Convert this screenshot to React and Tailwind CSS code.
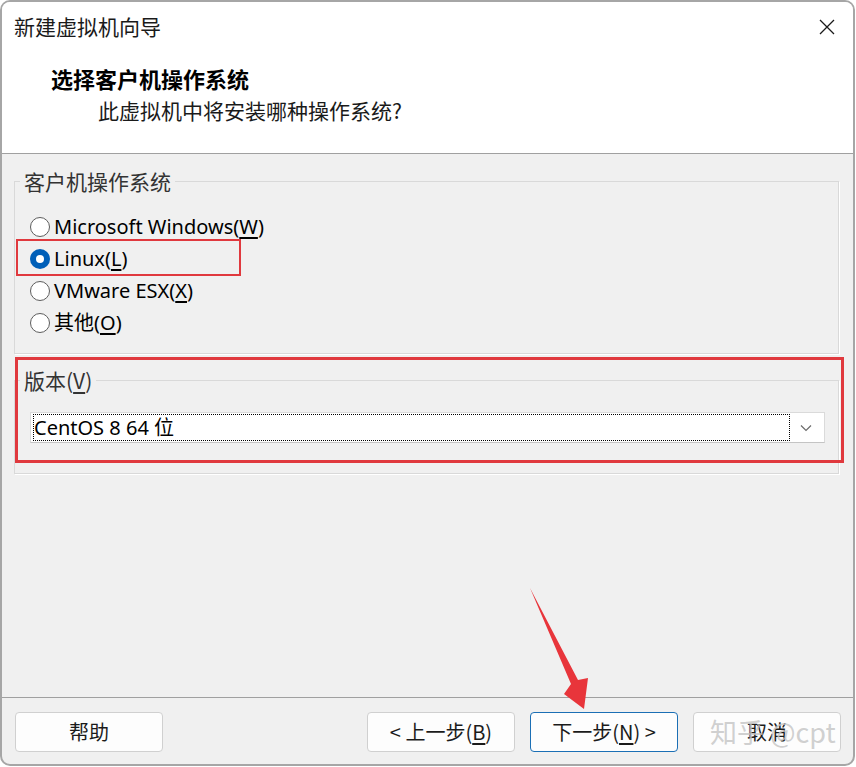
import React from 'react';

const cjk = '"Noto Sans CJK SC", sans-serif';

const Radio = ({ checked, children }) => (
  <div className="flex h-[32px] items-center">
    {checked ? (
      <span className="flex h-[20px] w-[20px] items-center justify-center rounded-full bg-[#005fb8]">
        <span className="h-[8px] w-[8px] rounded-full bg-white" />
      </span>
    ) : (
      <span className="h-[20px] w-[20px] rounded-full border border-[#5d5d5d] bg-white" />
    )}
    <span className="ml-[4px] text-[20px] leading-none text-black">{children}</span>
  </div>
);

const Btn = ({ children, focused }) => (
  <button
    type="button"
    className={`h-[40px] w-[148px] rounded-[4px] border bg-[#fdfdfd] text-[20px] text-[#1b1b1b] ${
      focused ? 'border-[#1b6fb5]' : 'border-[#d0d0d0]'
    }`}
  >
    {children}
  </button>
);

const U = ({ children }) => <span className="underline underline-offset-[3px]">{children}</span>;

export default function App() {
  return (
    <div className="relative h-[767px] w-[856px] bg-white" style={{ fontFamily: `"Noto Sans", ${cjk}` }}>
      <div className="flex h-[766px] w-[855px] flex-col overflow-hidden rounded-[10px] border-2 border-[#a6a6a6] bg-[#f0f0f0]">
        {/* header */}
        <div className="h-[152px] shrink-0 border-b border-[#a0a0a0] bg-white" style={{ fontFamily: cjk }}>
          <div className="flex h-[50px] items-center justify-between pl-[12px] pr-[18px]">
            <span className="text-[21px] text-[#1a1a1a]">新建虚拟机向导</span>
            <svg width="16" height="16" viewBox="0 0 16 16" className="text-[#1a1a1a]">
              <path d="M1 1 L15 15 M15 1 L1 15" stroke="currentColor" strokeWidth="1.3" fill="none" />
            </svg>
          </div>
          <div className="mt-[10px] h-[32px] pl-[49px] text-[22px] font-bold leading-[32px] text-black">
            选择客户机操作系统
          </div>
          <div className="h-[32px] pl-[96px] text-[21px] leading-[32px] text-[#1a1a1a]">
            此虚拟机中将安装哪种操作系统?
          </div>
        </div>

        {/* content */}
        <div className="h-[543px] shrink-0 pl-[12px] pr-[14px]">
          <fieldset className="mt-[13px] border border-[#d9d9d9] pb-[14px] pl-[15px] shadow-[1px_1px_0_#ffffff]">
            <legend className="-ml-[10px] px-[4px] text-[21px] leading-[28px] text-[#333]" style={{ fontFamily: cjk }}>
              客户机操作系统
            </legend>
            <div className="pt-[16px]">
              <Radio>
                Microsoft Windows(<U>W</U>)
              </Radio>
              <Radio checked>
                Linux(<U>L</U>)
              </Radio>
              <Radio>
                VMware ESX(<U>X</U>)
              </Radio>
              <Radio>
                其他(<U>O</U>)
              </Radio>
            </div>
          </fieldset>

          <fieldset className="mt-[12px] border border-[#d9d9d9] pb-[30px] pl-[15px] pr-[13px] shadow-[1px_1px_0_#ffffff]">
            <legend className="-ml-[10px] px-[4px] text-[21px] leading-[28px] text-[#333]" style={{ fontFamily: cjk }}>
              版本(<U>V</U>)
            </legend>
            <div className="mt-[18px] flex h-[31px] items-center border border-[#dadada] border-b-[#c4c4c4] bg-white pl-[2px] pr-[2px]">
              <div className="flex h-[27px] flex-1 items-center border border-dotted border-black text-[20px] text-black">
                CentOS 8 64 位
              </div>
              <div className="flex w-[32px] items-center justify-center">
                <svg width="12" height="8" viewBox="0 0 12 8">
                  <path d="M1 1.5 L6 6.5 L11 1.5" stroke="#6b6b6b" strokeWidth="1.2" fill="none" />
                </svg>
              </div>
            </div>
          </fieldset>
        </div>

        {/* footer */}
        <div className="flex flex-1 border-t border-[#a0a0a0] pl-[13px] pr-[12px] pt-[14px]" style={{ fontFamily: cjk }}>
          <Btn>帮助</Btn>
          <div className="ml-auto flex gap-[15px]">
            <Btn>
              {'< '}上一步(<U>B</U>)
            </Btn>
            <Btn focused>
              下一步(<U>N</U>){' >'}
            </Btn>
            <Btn>取消</Btn>
          </div>
        </div>
      </div>

      {/* annotations */}
      <div className="pointer-events-none absolute left-[16px] top-[239px] h-[37px] w-[225px] border-2 border-[#e0393e]" />
      <div className="pointer-events-none absolute left-[15px] top-[357px] h-[106px] w-[829px] border-[3px] border-[#e0393e]" />
      <svg className="pointer-events-none absolute left-[520px] top-[585px]" width="80" height="130" viewBox="0 0 80 130">
        <polygon points="10,3 58,95 68,93 64,124 44,109 51,99" fill="#e8353b" />
      </svg>
      <div
        className="pointer-events-none absolute left-[710px] top-[712px] text-[27px] leading-[40px] text-[#c4c4c4]/80"
        style={{ fontFamily: cjk }}
      >
        知乎 @cpt
      </div>
    </div>
  );
}
